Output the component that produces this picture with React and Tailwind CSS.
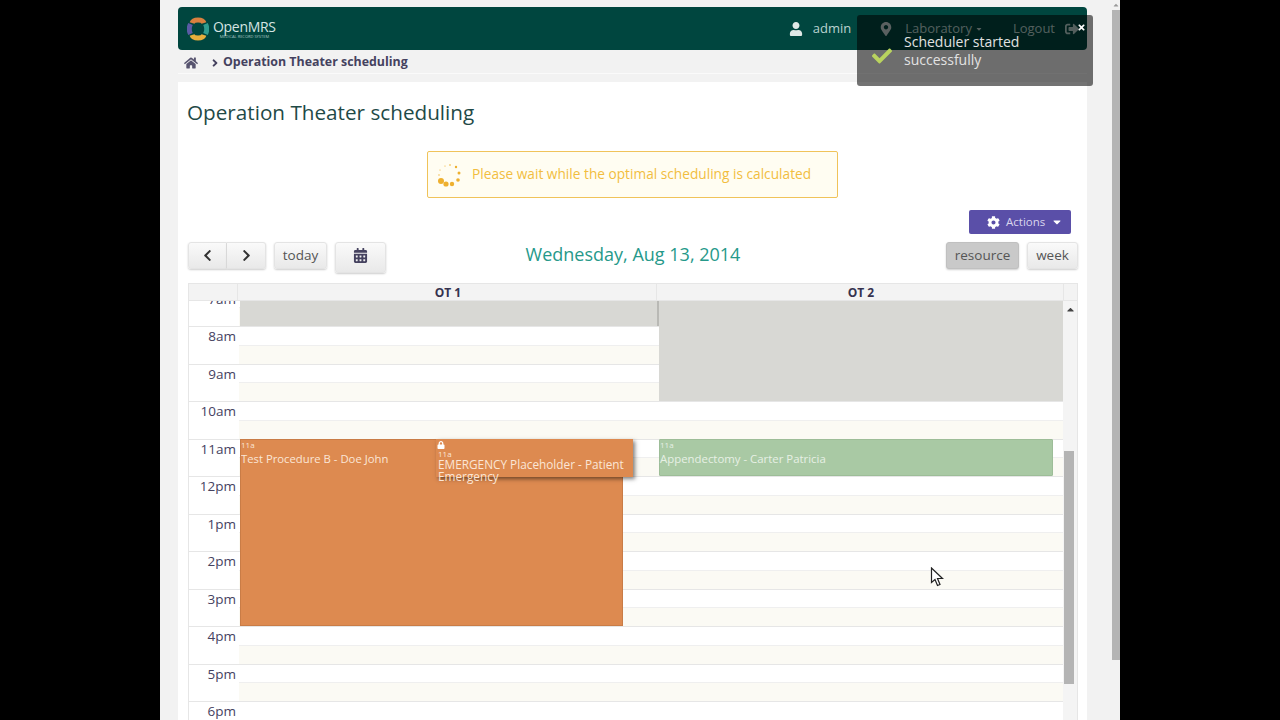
import { FaHome, FaUser, FaMapMarkerAlt, FaSignOutAlt, FaCheck, FaCog, FaCalendarAlt, FaChevronLeft, FaChevronRight, FaLock, FaTimes, FaAngleRight, FaCaretDown, FaCaretUp } from "react-icons/fa";

const hours = ["8am", "9am", "10am", "11am", "12pm", "1pm", "2pm", "3pm", "4pm", "5pm", "6pm"];

function Logo() {
  return (
    <svg width="22" height="24" viewBox="0 0 22 24" fill="none" strokeWidth="5">
      <path d="M5 6 Q6 3 11 3 Q16 3 17 6" stroke="#d9803f" />
      <path d="M18.5 7 Q21 12 18.5 17" stroke="#2f9c8f" />
      <path d="M17 18 Q16 21 11 21 Q6 21 5 18" stroke="#e8ae3c" />
      <path d="M3.5 17 Q1 12 3.5 7" stroke="#5a5ba6" />
    </svg>
  );
}

function Spinner() {
  const dots = [
    [13, 2, 0.8], [19, 4, 1.2], [22, 10, 1.5], [21, 17, 1.8], [15, 21, 2.2],
    [9, 21, 2.6], [4, 18, 3], [2, 12, 0.7], [3, 7, 0.6], [8, 3, 0.6],
  ];
  return (
    <svg width="24" height="24" viewBox="0 0 24 24">
      {dots.map((d, i) => (
        <circle key={i} cx={d[0]} cy={d[1]} r={d[2]} fill="#eeb02f" />
      ))}
    </svg>
  );
}

function Cursor() {
  return (
    <svg width="14" height="20" viewBox="0 0 14 20">
      <path d="M1.5 1 L1.5 15.5 L5 12.5 L7.5 18.5 L10 17.5 L7.5 11.5 L12.5 11.5 Z" fill="#fff" stroke="#222" strokeWidth="1.2" />
    </svg>
  );
}

function CalButton({ children, className = "" }) {
  return (
    <button className={`flex items-center justify-center border border-[#e4e4e4] rounded-[3px] bg-gradient-to-b from-[#fafafa] to-[#e9e9e9] text-[13.5px] text-[#555] shadow-[0_1px_2px_rgba(0,0,0,0.2)] ${className}`}>
      {children}
    </button>
  );
}

function HourRow({ label, className = "h-[37.5px]" }) {
  return (
    <div className={`flex shrink-0 ${className}`}>
      <div className="w-[50px] shrink-0 pt-[1px] pr-[3px] text-right text-[13.5px] leading-[17px] text-[#45425f] border-b border-[#e6e6e6] bg-white">
        {label}
      </div>
      <div className="flex-1 flex flex-col">
        <div className="flex-1 bg-white border-b border-[#efefef]"></div>
        <div className="flex-1 bg-[#fbfaf4] border-b border-[#e6e6e6]"></div>
      </div>
    </div>
  );
}

function Calendar() {
  return (
    <div className="relative mt-[12px] mr-[9px] ml-[1px] h-[437px]">
      <div className="flex h-[18px] bg-[#f3f3f3] border border-[#e6e6e6] text-[12px] font-bold text-[#35324f]">
        <div className="w-[49px] border-r border-[#e6e6e6]"></div>
        <div className="w-[419px] pl-[2px] border-r border-[#e6e6e6] text-center leading-[17px]">OT 1</div>
        <div className="w-[407px] pl-[2px] border-r border-[#e6e6e6] text-center leading-[17px]">OT 2</div>
      </div>
      <div className="relative flex h-[419px] overflow-hidden">
        <div className="w-[875px] shrink-0 flex flex-col border-l border-[#e6e6e6]">
          <div className="mt-[-11.5px]">
            <HourRow label="7am" />
          </div>
          {hours.map((h) => (
            <HourRow key={h} label={h} />
          ))}
        </div>
        <div className="relative w-[15px] shrink-0 bg-[#f4f4f4] border-r border-[#e6e6e6]">
          <FaCaretUp className="absolute left-[2px] top-[3px] text-[11px] text-[#444]" />
          <div className="absolute left-[1px] top-[150px] w-[10px] h-[233px] bg-[#b4b4b4]"></div>
        </div>

        <div className="absolute left-[52px] top-0 w-[419px] h-[25px] bg-[#d8d8d4] border-r-2 border-[#b9b9b5]"></div>
        <div className="absolute left-[471px] top-0 w-[404px] h-[100px] bg-[#d8d8d4]"></div>

        <div className="absolute left-[52px] top-[138px] w-[383px] h-[187px] bg-[#dd8a50] border border-[#c97c46] text-[#fbe6d6] overflow-hidden">
          <p className="text-[8px] leading-[10px]">11a</p>
          <p className="text-[11.3px] leading-[15px] pt-[1px]">Test Procedure B - Doe John</p>
        </div>
        <div className="absolute left-[248px] top-[138px] w-[197px] h-[38px] bg-[#dd8a50] text-[#fbe6d6] shadow-[2px_2px_4px_rgba(0,0,0,0.5)]">
          <FaLock className="ml-[1px] mt-[2px] text-[8px] text-white" />
          <p className="text-[8px] leading-[8px] pl-[2px] pt-[1px]">11a</p>
          <p className="text-[11.8px] leading-[11.5px] pl-[2px] pt-[1px]">EMERGENCY Placeholder - Patient Emergency</p>
        </div>
        <div className="absolute left-[471px] top-[138px] w-[394px] h-[37px] bg-[#a9c9a4] border border-[#9dbd98] rounded-[1px] text-[#e7f0e4]">
          <p className="text-[8px] leading-[10px]">11a</p>
          <p className="text-[11.4px] leading-[15px] pt-[1px]">Appendectomy - Carter Patricia</p>
        </div>

        <div className="absolute left-[742px] top-[266px]">
          <Cursor />
        </div>
      </div>
    </div>
  );
}

export default function App() {
  return (
    <div className="relative w-[1280px] h-[720px] overflow-hidden bg-black flex justify-center font-['Open_Sans',sans-serif]">
      <div className="relative w-[960px] h-full flex bg-[#f2f2f2]">
        <div className="w-[952px] shrink-0 pl-[18px] pr-[25px] pt-[7px]">
          <div className="flex items-center h-[43px] bg-[#00463f] rounded-[4px] pl-[9px] pr-[8px] text-[13px] text-[#b9d3cf]">
            <Logo />
            <div className="ml-[4px] leading-none">
              <div className="text-[14px] leading-[15px] tracking-[-0.3px] text-[#d5e4e2]">OpenMRS</div>
              <div className="text-[4px] leading-[5px] text-center text-[#a9c5c1]">MEDICAL RECORD SYSTEM</div>
            </div>
            <div className="ml-auto flex items-center">
              <FaUser className="text-[14px] text-[#dfe8e6]" />
              <span className="ml-[10px]">admin</span>
              <FaMapMarkerAlt className="ml-[28px] text-[14px] text-[#c8d6d4]" />
              <span className="ml-[12px]">Laboratory</span>
              <FaCaretDown className="ml-[3px] text-[8px]" />
              <span className="ml-[30px]">Logout</span>
              <FaSignOutAlt className="ml-[10px] text-[14px]" />
            </div>
          </div>
          <div className="flex items-center h-[23px] pt-[2px] pl-[6px] text-[12.4px] font-bold text-[#45425f]">
            <FaHome className="text-[14px] text-[#57546f]" />
            <FaAngleRight className="ml-[11px] mr-[2px] text-[12px]" />
            Operation Theater scheduling
          </div>
          <div className="h-[1px] bg-[#fafafa]"></div>
          <div className="h-[8px]"></div>
          <div className="h-[639px] bg-white pl-[9px]">
            <h1 className="pt-[15px] text-[20.7px] leading-[30px] text-[#1f4a47]">Operation Theater scheduling</h1>
            <div className="mt-[24px] ml-[240px] flex items-center w-[411px] h-[47px] bg-[#fffdf2] border border-[#f0c35a] rounded-[2px] pl-[9px] text-[13.7px] text-[#f2bd3f]">
              <Spinner />
              <span className="ml-[11px]">Please wait while the optimal scheduling is calculated</span>
            </div>
            <div className="mt-[12px] flex justify-end pr-[16px]">
              <button className="flex items-center w-[102px] h-[24px] pl-[18px] bg-[#5a4fa8] rounded-[2px] text-[11.5px] text-[#d9d6ee]">
                <FaCog className="text-[13px] text-white mr-[6px]" />
                Actions
                <FaCaretDown className="ml-[6px] text-[12px] text-white" />
              </button>
            </div>
            <div className="relative mt-[8px] flex items-start h-[29px] pr-[9px]">
              <div className="ml-[1px] flex">
                <CalButton className="w-[39px] h-[27px] rounded-r-none">
                  <FaChevronLeft className="text-[13px] text-[#333]" />
                </CalButton>
                <CalButton className="w-[39px] h-[27px] rounded-l-none border-l-0">
                  <FaChevronRight className="text-[13px] text-[#333]" />
                </CalButton>
              </div>
              <CalButton className="ml-[8px] w-[53px] h-[27px]">today</CalButton>
              <CalButton className="ml-[8px] w-[51px] h-[31px] pb-[4px]">
                <FaCalendarAlt className="text-[15px] text-[#45425f]" />
              </CalButton>
              <div className="flex-1 text-center text-[18px] leading-[24px] text-[#26998a] pr-[66px]">Wednesday, Aug 13, 2014</div>
              <CalButton className="w-[73px] h-[27px] !bg-none bg-[#c9c9c9] !border-[#c0c0c0]">resource</CalButton>
              <CalButton className="ml-[8px] w-[51px] h-[27px]">week</CalButton>
            </div>
            <Calendar />
          </div>
        </div>
        <div className="relative w-[8px] shrink-0">
          <FaCaretUp className="absolute left-0 top-[1px] text-[8px] text-[#999]" />
          <div className="mt-[10px] h-[650px] bg-[#b4b4b4]"></div>
        </div>

        <div className="absolute left-[697px] top-[15px] w-[236px] h-[71px] rounded-[3px] bg-[rgba(0,0,0,0.55)] text-[14px] leading-[18px] text-[#e2e2e2]">
          <FaCheck className="absolute left-[15px] top-[31px] text-[20px] text-[#b9d35f]" />
          <p className="absolute left-[47px] top-[18px] w-[140px]">Scheduler started successfully</p>
          <FaTimes className="absolute left-[220px] top-[8px] text-[9px] text-white" />
        </div>
      </div>
    </div>
  );
}
